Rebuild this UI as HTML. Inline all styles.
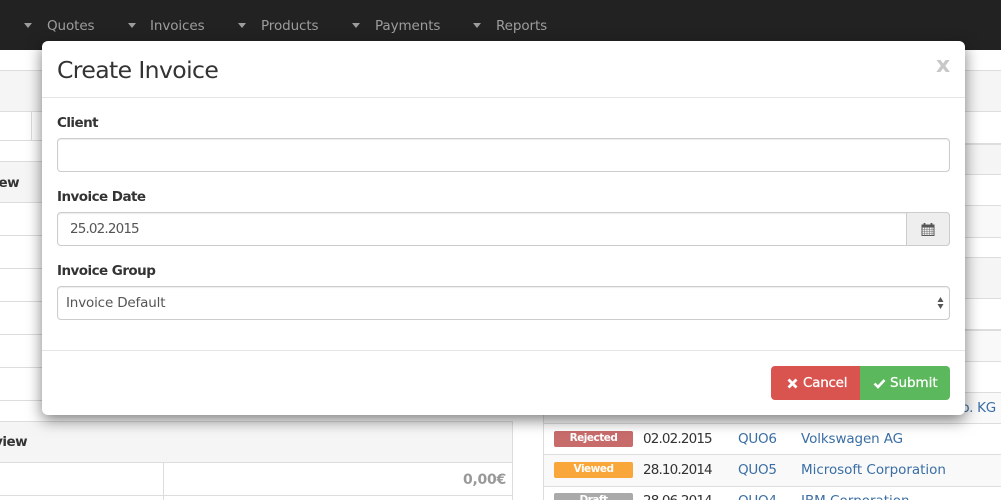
<!DOCTYPE html>
<html><head><meta charset="utf-8"><style>
html,body{margin:0;padding:0;width:1001px;height:500px;overflow:hidden}
body{background:#fff;font-family:"DejaVu Sans","Liberation Sans",sans-serif;font-size:13.5px;color:#333}
#w{position:relative;left:0;top:0;width:1001px;height:500px;overflow:hidden}
div,span.t{position:absolute;white-space:nowrap}
.h{left:0;width:1001px;height:1px;background:#ddd}
.g{background:#f5f5f5}
.s{background:#f9f9f9}
.t{line-height:20px;letter-spacing:-.25px}
.n{color:#9d9d9d;top:16px;font-size:13.5px;letter-spacing:-.1px}
.c{width:0;height:0;border-left:4.5px solid transparent;border-right:4.5px solid transparent;border-top:5px solid #9d9d9d;top:23px}
.a{color:#3a6ea5}
.wide{letter-spacing:-.03px}
.d{color:#333;letter-spacing:-.85px}
.b{font-weight:bold;font-size:13.5px;color:#333;letter-spacing:-.55px}
.l{left:554px;width:79px;height:16px;border-radius:2px;color:#fff;font-weight:bold;font-size:10.5px;line-height:15px;text-align:center;letter-spacing:-.5px}
.i{left:57px;width:891px;height:32px;border:1px solid #ccc;border-radius:4px;background:#fff;box-shadow:inset 0 1px 1px rgba(0,0,0,.075)}
</style></head><body><div id="w">
<div style="left:0;top:0;width:1001px;height:50px;background:#222"></div>
<div class="c" style="left:24px"></div><span class="t n" style="left:47px">Quotes</span>
<div class="c" style="left:128px"></div><span class="t n" style="left:150px">Invoices</span>
<div class="c" style="left:238px"></div><span class="t n" style="left:261px">Products</span>
<div class="c" style="left:352px"></div><span class="t n" style="left:375px">Payments</span>
<div class="c" style="left:473px"></div><span class="t n" style="left:496px">Reports</span>

<div class="g" style="left:0;top:70px;width:1001px;height:41px"></div>
<div class="g" style="left:0;top:161px;width:513px;height:41px"></div>
<div class="g" style="left:0;top:421px;width:512px;height:41px"></div>
<div class="g" style="left:543px;top:143px;width:458px;height:31px"></div>
<div class="s" style="left:543px;top:205px;width:458px;height:32px"></div>
<div class="g" style="left:543px;top:257px;width:458px;height:41px"></div>
<div class="s" style="left:543px;top:329px;width:458px;height:32px"></div>
<div class="s" style="left:543px;top:392px;width:458px;height:31px"></div>
<div class="s" style="left:543px;top:454px;width:458px;height:32px"></div>

<div class="h" style="top:70px"></div>
<div class="h" style="top:111px"></div>
<div class="h" style="top:140px;width:520px"></div>
<div class="h" style="top:161px;width:513px"></div>
<div class="h" style="top:202px;width:513px"></div>
<div class="h" style="top:235px;width:513px"></div>
<div class="h" style="top:268px;width:513px"></div>
<div class="h" style="top:301px;width:513px"></div>
<div class="h" style="top:334px;width:513px"></div>
<div class="h" style="top:367px;width:513px"></div>
<div class="h" style="top:400px;width:513px"></div>
<div class="h" style="top:421px;width:512px"></div>
<div class="h" style="top:462px;width:512px"></div>
<div class="h" style="top:495px;width:512px"></div>
<div style="left:31px;top:111px;width:1px;height:29px;background:#ddd"></div>
<div style="left:163px;top:462px;width:1px;height:38px;background:#ddd"></div>
<div style="left:512px;top:421px;width:1px;height:79px;background:#ddd"></div>
<div style="left:543px;top:400px;width:1px;height:100px;background:#ddd"></div>
<div class="h" style="left:543px;top:143px;width:458px;height:2px"></div>
<div class="h" style="left:543px;top:174px;width:458px"></div>
<div class="h" style="left:543px;top:205px;width:458px"></div>
<div class="h" style="left:543px;top:237px;width:458px"></div>
<div class="h" style="left:543px;top:257px;width:458px"></div>
<div class="h" style="left:543px;top:298px;width:458px"></div>
<div class="h" style="left:543px;top:329px;width:458px;height:2px"></div>
<div class="h" style="left:543px;top:361px;width:458px"></div>
<div class="h" style="left:543px;top:392px;width:458px"></div>
<div class="h" style="left:543px;top:423px;width:458px"></div>
<div class="h" style="left:543px;top:454px;width:458px"></div>
<div class="h" style="left:543px;top:486px;width:458px"></div>

<span class="t b" style="right:982px;top:173px">Overview</span>
<span class="t b" style="right:974px;top:432px">Overview</span>
<span class="t" style="right:495px;top:470px;font-weight:bold;color:#999;font-size:14px">0,00€</span>

<div class="l" style="top:399px;background:#3c763d"></div>
<span class="t a" style="right:5px;top:398px">Co. KG</span>
<div class="l" style="top:431px;background:#c86b6b">Rejected</div>
<span class="t d" style="left:643px;top:429px">02.02.2015</span>
<span class="t a" style="left:738px;top:429px">QUO6</span>
<span class="t a" style="left:801px;top:429px;letter-spacing:-.12px">Volkswagen AG</span>
<div class="l" style="top:462px;background:#f9a63a">Viewed</div>
<span class="t d" style="left:643px;top:460px">28.10.2014</span>
<span class="t a" style="left:738px;top:460px">QUO5</span>
<span class="t a wide" style="left:801px;top:460px">Microsoft Corporation</span>
<div class="l" style="top:493px;background:#aaa">Draft</div>
<span class="t d" style="left:643px;top:491px">28.06.2014</span>
<span class="t a" style="left:738px;top:491px">QUO4</span>
<span class="t a wide" style="left:801px;top:491px">IBM Corporation</span>

<div style="left:42px;top:41px;width:923px;height:374px;background:#fff;border-radius:6px;box-shadow:0 5px 15px rgba(0,0,0,.5)"></div>
<div style="left:42px;top:97px;width:923px;height:1px;background:#e5e5e5"></div>
<div style="left:42px;top:350px;width:923px;height:1px;background:#e5e5e5"></div>
<span class="t" style="left:57px;top:56px;line-height:28px;font-size:23.5px;letter-spacing:-.6px;color:#333">Create Invoice</span>
<span class="t" style="left:936px;top:56px;font-weight:bold;font-size:22px;color:#c8c8c8;letter-spacing:0">x</span>

<span class="t b" style="left:57px;top:113px">Client</span>
<div class="i" style="top:138px"></div>
<span class="t b" style="left:57px;top:187px">Invoice Date</span>
<div class="i" style="top:212px"></div>
<span class="t" style="left:70px;top:219px;color:#555;letter-spacing:-.85px">25.02.2015</span>
<div style="left:906px;top:212px;width:42px;height:32px;border:1px solid #ccc;border-radius:0 4px 4px 0;background:#eee"></div>
<svg style="position:absolute;left:921px;top:222px" width="14" height="14" viewBox="0 0 14 14"><path d="M1 3h12v10.500H1z" fill="#eee" stroke="#555" stroke-width="1"/><path d="M1 3h12v2.500H1z" fill="#555"/><path d="M3.500 1v3M10.500 1v3" stroke="#555" stroke-width="1.800"/><path d="M1 7.500h12M1 9.500h12M1 11.500h12M3.500 5.500v8M6 5.500v8M8.500 5.500v8M11 5.500v8" stroke="#777" stroke-width=".6"/></svg>
<span class="t b" style="left:57px;top:261px">Invoice Group</span>
<div class="i" style="top:286px"></div>
<span class="t" style="left:66px;top:293px;color:#555;letter-spacing:-.17px">Invoice Default</span>
<svg style="position:absolute;left:936px;top:296px" width="9" height="14" viewBox="0 0 9 14"><path d="M4.500 1L7.500 6H1.500zM1.500 8h6l-3 5z" fill="#555"/></svg>

<div style="left:771px;top:366px;width:89px;height:34px;background:#d9534f;border-radius:4px 0 0 4px"></div>
<div style="left:860px;top:366px;width:90px;height:34px;background:#5cb85c;border-radius:0 4px 4px 0"></div>
<svg style="position:absolute;left:787px;top:378px" width="11" height="11" viewBox="0 0 11 11"><path d="M1.500 1.500l8 8M9.500 1.500l-8 8" stroke="#fff" stroke-width="2.800"/></svg>
<span class="t" style="left:803px;top:373px;color:#fff;-webkit-text-stroke:.25px #fff;letter-spacing:-.25px">Cancel</span>
<svg style="position:absolute;left:873px;top:378px" width="13" height="11" viewBox="0 0 13 11"><path d="M1.500 5.500l3.500 3.500L11.500 2" fill="none" stroke="#fff" stroke-width="2.600"/></svg>
<span class="t" style="left:890px;top:373px;color:#fff;-webkit-text-stroke:.25px #fff;letter-spacing:-.05px">Submit</span>
</div></body></html>
